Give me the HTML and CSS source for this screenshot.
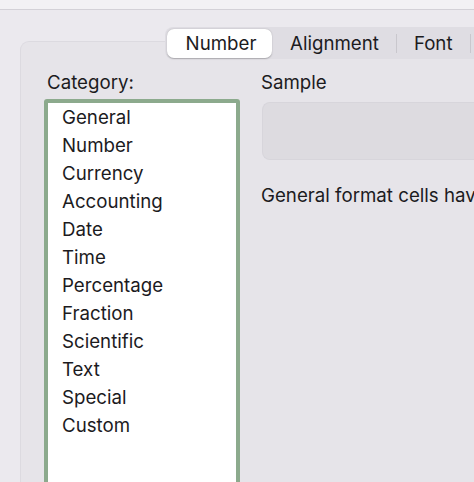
FILE: index.html
```html
<!DOCTYPE html>
<html>
<head>
<meta charset="utf-8">
<link rel="stylesheet" href="styles.css">
</head>
<body>
<div class="titlebar"></div>
<div class="window">
  <div class="tabs">
    <div class="tab active">Number</div>
    <div class="tab">Alignment</div>
    <div class="sep"></div>
    <div class="tab">Font</div>
    <div class="sep"></div>
  </div>
  <div class="group">
    <div class="col-left">
      <div class="label">Category:</div>
      <ul class="list">
        <li>General</li>
        <li>Number</li>
        <li>Currency</li>
        <li>Accounting</li>
        <li>Date</li>
        <li>Time</li>
        <li>Percentage</li>
        <li>Fraction</li>
        <li>Scientific</li>
        <li>Text</li>
        <li>Special</li>
        <li>Custom</li>
      </ul>
    </div>
    <div class="col-right">
      <div class="label">Sample</div>
      <div class="sample"></div>
      <div class="desc">General format cells have no specific number format.</div>
    </div>
  </div>
</div>
</body>
</html>
```

FILE: styles.css
```css
html, body {
  margin: 0;
  padding: 0;
  height: 100%;
  overflow: hidden;
}
body {
  background: #ebe9ee;
  font-family: Inter, "Noto Sans", sans-serif;
  font-size: 18.7px;
  color: #1c1b1e;
}
.titlebar {
  height: 9px;
  background: #f2f1f4;
  border-bottom: 1px solid #d3d1d7;
}
.window {
  padding-top: 17px;
  padding-left: 20px;
}
.tabs {
  position: relative;
  z-index: 2;
  margin-left: 145px;
  height: 32px;
  background: #dfdde3;
  border-radius: 8px 0 0 8px;
  display: flex;
  align-items: center;
  padding-left: 2px;
  white-space: nowrap;
  width: 400px;
}
.tab {
  line-height: 29px;
  padding: 0 17px;
}
.tab.active {
  background: #ffffff;
  border-radius: 7px;
  box-shadow: 0 0.5px 1.5px rgba(0,0,0,0.25);
  padding: 0 14px 0 17px;
  width: 74px;
  text-align: center;
}
.tab:nth-child(2) {
  padding: 0 17px 0 18px;
}
.sep {
  width: 1px;
  height: 19px;
  background: #c9c7cd;
}
.group {
  margin-top: -18px;
  background: #e6e4e9;
  border: 1px solid #dcdae0;
  border-radius: 9px 0 0 0;
  border-right: none;
  padding: 30px 0 0 23px;
  display: flex;
  gap: 21px;
  height: 480px;
}
.label {
  line-height: 22px;
  margin-left: 3px;
}
.col-left {
  width: 196px;
  flex: none;
}
.list {
  list-style: none;
  margin: 5px 0 0 0;
  padding: 1px 0 0 14px;
  background: #ffffff;
  border: 4px solid #8caa8d;
  border-radius: 3px;
  height: 400px;
}
.list li {
  line-height: 28px;
}
.col-right {
  flex: 1;
  min-width: 0;
  white-space: nowrap;
  overflow: hidden;
}
.col-right .label {
  margin-left: 0;
}
.sample {
  margin-top: 8px;
  margin-left: 1px;
  height: 56px;
  background: #dddbe0;
  border: 1px solid #d7d5db;
  border-right: none;
  border-radius: 8px 0 0 8px;
}
.desc {
  margin-top: 25px;
  line-height: 22px;
}
```
